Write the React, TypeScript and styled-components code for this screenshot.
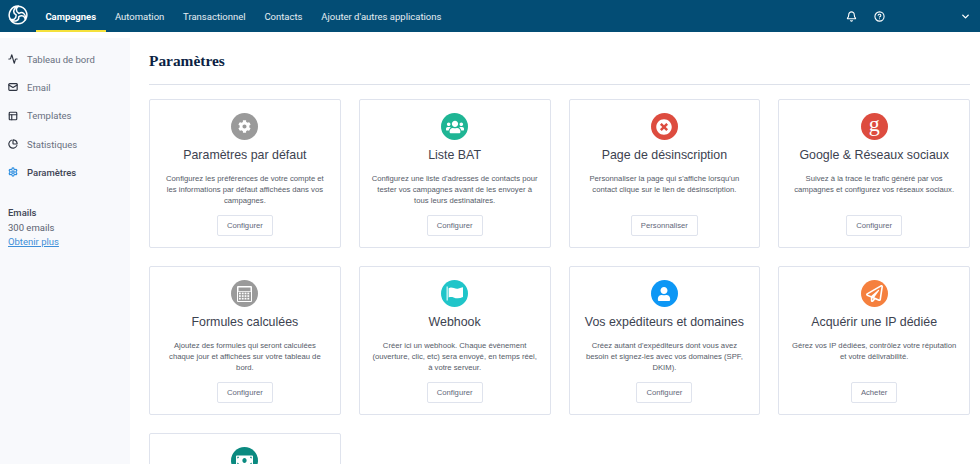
import React from "react";
import styled, { createGlobalStyle } from "styled-components";
import { Activity, Bell, ChartPie, ChevronDown, CircleHelp, Mail, PanelsTopLeft, Settings } from "lucide-react";
import { FaCog, FaMoneyBill, FaRegPaperPlane, FaTimesCircle, FaUser, FaUsers } from "react-icons/fa";

const GlobalStyle = createGlobalStyle`
  html, body {
    margin: 0;
    height: 100%;
    overflow: hidden;
    background: #fff;
    font-family: "Roboto", "Liberation Sans", sans-serif;
  }
  * { box-sizing: border-box; }
`;

const Page = styled.div`
  height: 464px;
  display: flex;
  flex-direction: column;
  overflow: hidden;
`;

const TopBar = styled.header`
  flex: none;
  height: 32px;
  background: #034d75;
  display: flex;
  align-items: stretch;
  padding-left: 8px;
  color: #fff;
`;

const LogoBox = styled.div`
  width: 28px;
  display: flex;
  align-items: center;
  svg { margin-top: -2px; }
`;

const MainNav = styled.nav`
  display: flex;
  align-items: stretch;
`;

const NavItem = styled.a<{ $active?: boolean }>`
  padding: 0 9.4px;
  display: flex;
  align-items: center;
  font-size: 9.5px;
  font-weight: ${(p) => (p.$active ? 700 : 400)};
  color: ${(p) => (p.$active ? "#fff" : "#e6eef3")};
  border-bottom: 2px solid ${(p) => (p.$active ? "#f5e13c" : "transparent")};
  border-top: 2px solid transparent;
  white-space: nowrap;
`;

const TopIcons = styled.div`
  margin-left: auto;
  display: flex;
  align-items: center;
  gap: 17px;
  padding-right: 9px;
`;

const ChevronSlot = styled.span`
  margin-left: 58px;
  display: flex;
`;

const Body = styled.div`
  flex: 1;
  min-height: 0;
  display: flex;
  padding-top: 6px;
`;

const Sidebar = styled.aside`
  flex: none;
  width: 130px;
  background: #f8f9fc;
  padding: 7px 8px 0;
`;

const SideItem = styled.a<{ $active?: boolean }>`
  height: 28.3px;
  display: flex;
  align-items: center;
  gap: 9px;
  font-size: 9.5px;
  color: ${(p) => (p.$active ? "#3e4454" : "#687080")};
  font-weight: ${(p) => (p.$active ? 500 : 400)};
  svg { flex: none; }
`;

const Quota = styled.div`
  margin-top: 20px;
  font-size: 9.5px;
  line-height: 14.4px;
  color: #5a6170;
`;

const QuotaTitle = styled.div`
  font-weight: 500;
  color: #3e4454;
`;

const QuotaLink = styled.a`
  color: #3f8fd8;
  text-decoration: underline;
`;

const Content = styled.main`
  flex: 1;
  min-width: 0;
  padding: 0 10px 0 19px;
`;

const PageTitle = styled.h1`
  margin: 0;
  height: 47px;
  padding-top: 13px;
  font-family: "Liberation Serif", serif;
  font-size: 15.4px;
  line-height: 20px;
  font-weight: 700;
  color: #0b1f44;
  border-bottom: 1px solid #dde1ea;
`;

const CardGrid = styled.div`
  margin-top: 14px;
  display: grid;
  grid-template-columns: repeat(4, 1fr);
  grid-auto-rows: 149px;
  gap: 18px;
`;

const Card = styled.section`
  border: 1px solid #dfe3ed;
  border-radius: 2px;
  background: #fff;
  display: flex;
  flex-direction: column;
  align-items: center;
  padding: 13px 11px 0;
  font-family: "Liberation Sans", Arial, sans-serif;
`;

const IconCircle = styled.div<{ $bg: string }>`
  flex: none;
  width: 27px;
  height: 27px;
  border-radius: 50%;
  background: ${(p) => p.$bg};
  color: #fff;
  display: flex;
  align-items: center;
  justify-content: center;
`;

const GoogleG = styled.span`
  font-family: "Liberation Serif", serif;
  font-size: 22px;
  font-weight: 400;
  line-height: 20px;
  margin-top: -5px;
`;

const CardTitle = styled.h2`
  margin: 7px 0 0;
  font-size: 12.4px;
  line-height: 16px;
  font-weight: 400;
  color: #3c4250;
  white-space: nowrap;
`;

const CardText = styled.p`
  margin: 10px 0 0;
  height: 33px;
  font-size: 7.7px;
  line-height: 11px;
  color: #555b68;
  text-align: center;
`;

const CardButton = styled.button`
  margin-top: 9px;
  height: 21px;
  padding: 0 9px;
  border: 1px solid #dfe3ed;
  border-radius: 2px;
  background: #fff;
  font-family: inherit;
  font-size: 7.7px;
  color: #62687a;
`;

function LogoMark() {
  const blade = "M11 8.5 C7.5 6.5 7.6 3 10.6 1.2 A8.9 8.9 0 0 1 17.6 14.6 C18.2 9 14.4 6 11 8.5 Z";
  return (
    <svg width="20" height="20" viewBox="0 0 20 20" fill="none" stroke="#fff" strokeWidth="1.5" strokeLinejoin="round">
      <path d={blade} />
      <path d={blade} transform="rotate(120 10 10)" />
      <path d={blade} transform="rotate(240 10 10)" />
    </svg>
  );
}

function FlagIcon() {
  return (
    <svg width="18" height="15" viewBox="0 0 18 15" fill="#fff">
      <rect x="0.5" y="0.5" width="1.4" height="14" fill="#c9f1f1" />
      <path d="M2.6 2.2 C6 0.2 9 3.6 12.6 2.4 C14.2 1.9 15.6 1.4 17 1.2 L17 11 C13.6 12.6 10.4 12.6 7.6 11.4 C6 10.8 4.2 10.8 2.6 11.4 Z" />
    </svg>
  );
}

function CalcIcon() {
  const keys = [];
  for (let row = 0; row < 3; row++) {
    for (let col = 0; col < 4; col++) {
      keys.push(<rect key={`${row}-${col}`} x={2 + col * 2.8} y={6.6 + row * 2.6} width="1.8" height="1.7" />);
    }
  }
  return (
    <svg width="15" height="16" viewBox="0 0 15 16" fill="#fff">
      <path fillRule="evenodd" d="M1 0 H14 A1 1 0 0 1 15 1 V15 A1 1 0 0 1 14 16 H1 A1 1 0 0 1 0 15 V1 A1 1 0 0 1 1 0 Z M1.5 1.5 V5 H13.5 V1.5 Z M1 5.8 V15 H14 V5.8 Z" />
      {keys}
    </svg>
  );
}

const topNav = ["Automation", "Transactionnel", "Contacts", "Ajouter d'autres applications"];

const sideNav = [
  { label: "Tableau de bord", icon: <Activity size={10} color="#2f3542" strokeWidth={2.8} /> },
  { label: "Email", icon: <Mail size={10} color="#2f3542" strokeWidth={2.8} /> },
  { label: "Templates", icon: <PanelsTopLeft size={10} color="#2f3542" strokeWidth={2.8} /> },
  { label: "Statistiques", icon: <ChartPie size={10} color="#2f3542" strokeWidth={2.8} /> },
  { label: "Paramètres", icon: <Settings size={10} color="#2f8fe0" strokeWidth={3} />, active: true },
];

const cards = [
  { title: "Paramètres par défaut", text: "Configurez les préférences de votre compte et les informations par défaut affichées dans vos campagnes.", action: "Configurer", bg: "#9a9a9a", icon: <FaCog size={13} /> },
  { title: "Liste BAT", text: "Configurez une liste d'adresses de contacts pour tester vos campagnes avant de les envoyer à tous leurs destinataires.", action: "Configurer", bg: "#1fb594", icon: <FaUsers size={18} /> },
  { title: "Page de désinscription", text: "Personnaliser la page qui s'affiche lorsqu'un contact clique sur le lien de désinscription.", action: "Personnaliser", bg: "#dd4c3f", icon: <FaTimesCircle size={16} /> },
  { title: "Google & Réseaux sociaux", text: "Suivez à la trace le trafic généré par vos campagnes et configurez vos réseaux sociaux.", action: "Configurer", bg: "#dd4c3f", icon: <GoogleG>g</GoogleG> },
  { title: "Formules calculées", text: "Ajoutez des formules qui seront calculées chaque jour et affichées sur votre tableau de bord.", action: "Configurer", bg: "#9a9a9a", icon: <CalcIcon /> },
  { title: "Webhook", text: "Créer ici un webhook. Chaque évènement (ouverture, clic, etc) sera envoyé, en temps réel, à votre serveur.", action: "Configurer", bg: "#20c5c9", icon: <FlagIcon /> },
  { title: "Vos expéditeurs et domaines", text: "Créez autant d'expéditeurs dont vous avez besoin et signez-les avec vos domaines (SPF, DKIM).", action: "Configurer", bg: "#0d97f5", icon: <FaUser size={14} /> },
  { title: "Acquérir une IP dédiée", text: "Gérez vos IP dédiées, contrôlez votre réputation et votre délivrabilité.", action: "Acheter", bg: "#f5803e", icon: <FaRegPaperPlane size={17} /> },
];

export default function App() {
  return (
    <>
      <GlobalStyle />
      <Page>
        <TopBar>
          <LogoBox><LogoMark /></LogoBox>
          <MainNav>
            <NavItem $active>Campagnes</NavItem>
            {topNav.map((item) => <NavItem key={item}>{item}</NavItem>)}
          </MainNav>
          <TopIcons>
            <Bell size={11} color="#fff" strokeWidth={2.4} />
            <CircleHelp size={11} color="#fff" strokeWidth={2.4} />
            <ChevronSlot><ChevronDown size={11} color="#fff" strokeWidth={3} /></ChevronSlot>
          </TopIcons>
        </TopBar>
        <Body>
          <Sidebar>
            {sideNav.map((item) => (
              <SideItem key={item.label} $active={item.active}>
                {item.icon}
                {item.label}
              </SideItem>
            ))}
            <Quota>
              <QuotaTitle>Emails</QuotaTitle>
              <div>300 emails</div>
              <QuotaLink>Obtenir plus</QuotaLink>
            </Quota>
          </Sidebar>
          <Content>
            <PageTitle>Paramètres</PageTitle>
            <CardGrid>
              {cards.map((card) => (
                <Card key={card.title}>
                  <IconCircle $bg={card.bg}>{card.icon}</IconCircle>
                  <CardTitle>{card.title}</CardTitle>
                  <CardText>{card.text}</CardText>
                  <CardButton>{card.action}</CardButton>
                </Card>
              ))}
              <Card>
                <IconCircle $bg="#0a8a80"><FaMoneyBill size={17} /></IconCircle>
              </Card>
            </CardGrid>
          </Content>
        </Body>
      </Page>
    </>
  );
}
